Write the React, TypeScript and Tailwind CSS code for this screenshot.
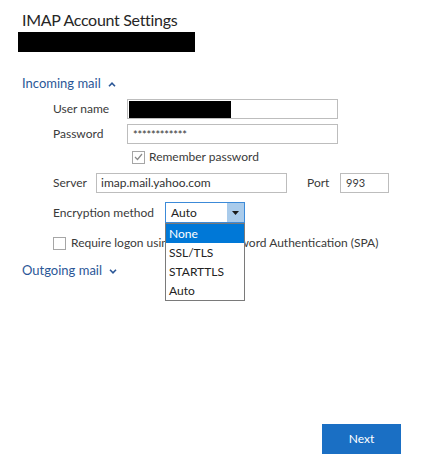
import React from "react";

const font = { fontFamily: 'Lato, "Noto Sans", sans-serif' };

const Check = ({ checked }: { checked?: boolean }) => (
  <span className="flex h-[13px] w-[13px] items-center justify-center border border-[#a6a6a6] bg-white">
    {checked && (
      <svg width="9" height="8" viewBox="0 0 9 8">
        <polyline points="1,4 3.5,6.5 8,1" fill="none" stroke="#8a8a8a" strokeWidth="1.2" />
      </svg>
    )}
  </span>
);

const Chevron = ({ up }: { up?: boolean }) => (
  <svg width="8" height="5" viewBox="0 0 8 5" className="ml-[7px]">
    <polyline
      points={up ? "1,4.2 4,1.2 7,4.2" : "1,0.8 4,3.8 7,0.8"}
      fill="none"
      stroke="#2b5797"
      strokeWidth="1.6"
    />
  </svg>
);

const options = ["None", "SSL/TLS", "STARTTLS", "Auto"];

export default function App() {
  return (
    <div className="flex h-[462px] w-[424px] flex-col whitespace-nowrap bg-white text-[12px] text-[#3a3a3a]" style={font}>
      <div className="ml-[22px] mt-[8px] h-[24px] text-[16px] leading-[24px] tracking-[-0.3px] text-[#262626]">IMAP Account Settings</div>
      <div className="ml-[18px] h-[20px] w-[177px] bg-black" />

      <div className="ml-[22px] mt-[23px] flex h-[18px] items-center text-[13px] text-[#2b5797]">
        Incoming mail
        <Chevron up />
      </div>

      <div className="mt-[6px] flex h-[20px] items-center">
        <span className="ml-[53px] w-[74px]">User name</span>
        <div className="flex h-[20px] w-[211px] items-center border border-[#bdbdbd] px-[1px]">
          <div className="h-[17px] w-[102px] bg-black" />
        </div>
      </div>

      <div className="mt-[5px] flex h-[20px] items-center">
        <span className="ml-[53px] w-[74px]">Password</span>
        <div className="flex h-[20px] w-[211px] items-center border border-[#bdbdbd] px-[5px] pt-[3px] text-[11px] tracking-[-0.2px] text-[#333]">
          ************
        </div>
      </div>

      <div className="mt-[6px] flex h-[14px] items-center">
        <span className="ml-[132px]">
          <Check checked />
        </span>
        <span className="ml-[4px]">Remember password</span>
      </div>

      <div className="mt-[9px] flex h-[20px] items-center">
        <span className="ml-[53px] w-[43px]">Server</span>
        <div className="flex h-[20px] w-[191px] items-center border border-[#bdbdbd] px-[4px] text-[#333]">
          imap.mail.yahoo.com
        </div>
        <span className="ml-[20px] w-[33px]">Port</span>
        <div className="flex h-[20px] w-[49px] items-center border border-[#bdbdbd] px-[5px] text-[11px]">993</div>
      </div>

      <div className="mt-[9px] flex h-[21px] items-center">
        <span className="ml-[53px] w-[112px]">Encryption method</span>
        <div className="relative">
          <div className="flex h-[21px] w-[80px] items-center border border-[#3c8ad8] bg-white">
            <span className="flex-1 pl-[5px] text-[#222]">Auto</span>
            <span className="flex h-[19px] w-[17px] items-center justify-center bg-[#a9cbeb]">
              <svg width="7" height="4" viewBox="0 0 7 4">
                <polygon points="0,0 7,0 3.5,4" fill="#1a1a1a" />
              </svg>
            </span>
          </div>
          <div className="absolute left-0 top-full z-10 w-[80px] border border-[#7a7a7a] bg-white">
            {options.map((o, i) => (
              <div
                key={o}
                className={
                  i === 0
                    ? "flex h-[19px] items-center bg-[#0078d7] pl-[3px] text-white"
                    : "flex h-[19px] items-center pl-[3px] text-[#222]"
                }
              >
                {o}
              </div>
            ))}
          </div>
        </div>
      </div>

      <div className="mt-[13px] flex h-[14px] items-center">
        <span className="ml-[53px]">
          <Check />
        </span>
        <span className="ml-[5px]">Require logon using Secure Password Authentication (SPA)</span>
      </div>

      <div className="ml-[22px] mt-[12px] flex h-[18px] items-center text-[13px] text-[#2b5797]">
        Outgoing mail
        <Chevron />
      </div>

      <div className="mt-auto mb-[8px] flex justify-end pr-[23px]">
        <button className="h-[30px] w-[79px] bg-[#1a6fc4] text-[12px] text-white">Next</button>
      </div>
    </div>
  );
}
